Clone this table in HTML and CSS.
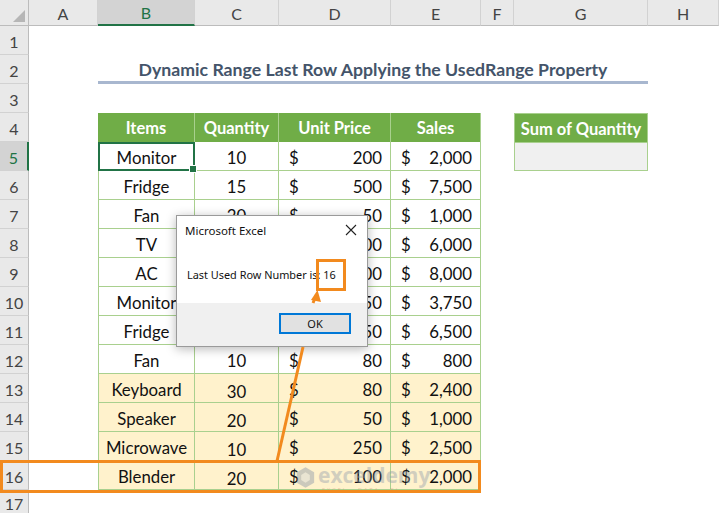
FILE: index.html
```html
<!DOCTYPE html>
<html>
<head>
<meta charset="utf-8">
<link rel="stylesheet" href="styles.css">
</head>
<body>
<div class="sheet">
  <div class="ch corner"><svg width="12" height="12" viewBox="0 0 12 12"><polygon points="12,0 12,12 0,12" fill="#b6b6b6"/></svg></div>
  <div class="ch">A</div><div class="ch chsel">B</div><div class="ch">C</div><div class="ch">D</div><div class="ch">E</div><div class="ch">F</div><div class="ch">G</div><div class="ch">H</div>

  <div class="rh">1</div><div class="blank span8"></div>
  <div class="rh">2</div><div class="blank"></div><div class="title">Dynamic Range Last Row Applying the UsedRange Property</div><div class="blank"></div>
  <div class="rh">3</div><div class="blank span8"></div>

  <div class="rh">4</div><div class="blank"></div>
  <div class="th first">Items</div><div class="th">Quantity</div><div class="th">Unit Price</div><div class="th">Sales</div>
  <div class="blank"></div><div class="th single">Sum of Quantity</div><div class="blank"></div>

  <div class="rh rhsel">5</div><div class="blank"></div>
  <div class="td first sel">Monitor</div><div class="td">10</div><div class="td acct"><span>$</span><span>200</span></div><div class="td acct"><span>$</span><span>2,000</span></div>
  <div class="blank"></div><div class="sumcell"></div><div class="blank"></div>

  <div class="rh">6</div><div class="blank"></div>
  <div class="td first">Fridge</div><div class="td">15</div><div class="td acct"><span>$</span><span>500</span></div><div class="td acct"><span>$</span><span>7,500</span></div><div class="blank span3"></div>

  <div class="rh">7</div><div class="blank"></div>
  <div class="td first">Fan</div><div class="td">20</div><div class="td acct"><span>$</span><span>50</span></div><div class="td acct"><span>$</span><span>1,000</span></div><div class="blank span3"></div>

  <div class="rh">8</div><div class="blank"></div>
  <div class="td first">TV</div><div class="td">20</div><div class="td acct"><span>$</span><span>300</span></div><div class="td acct"><span>$</span><span>6,000</span></div><div class="blank span3"></div>

  <div class="rh">9</div><div class="blank"></div>
  <div class="td first">AC</div><div class="td">20</div><div class="td acct"><span>$</span><span>400</span></div><div class="td acct"><span>$</span><span>8,000</span></div><div class="blank span3"></div>

  <div class="rh">10</div><div class="blank"></div>
  <div class="td first">Monitor</div><div class="td">15</div><div class="td acct"><span>$</span><span>250</span></div><div class="td acct"><span>$</span><span>3,750</span></div><div class="blank span3"></div>

  <div class="rh">11</div><div class="blank"></div>
  <div class="td first">Fridge</div><div class="td">10</div><div class="td acct"><span>$</span><span>650</span></div><div class="td acct"><span>$</span><span>6,500</span></div><div class="blank span3"></div>

  <div class="rh">12</div><div class="blank"></div>
  <div class="td first">Fan</div><div class="td">10</div><div class="td acct"><span>$</span><span>80</span></div><div class="td acct"><span>$</span><span>800</span></div><div class="blank span3"></div>

  <div class="rh">13</div><div class="blank"></div>
  <div class="td first y">Keyboard</div><div class="td y low">30</div><div class="td acct y"><span>$</span><span>80</span></div><div class="td acct y"><span>$</span><span>2,400</span></div><div class="blank span3"></div>

  <div class="rh">14</div><div class="blank"></div>
  <div class="td first y">Speaker</div><div class="td y low">20</div><div class="td acct y"><span>$</span><span>50</span></div><div class="td acct y"><span>$</span><span>1,000</span></div><div class="blank span3"></div>

  <div class="rh">15</div><div class="blank"></div>
  <div class="td first y">Microwave</div><div class="td y low">10</div><div class="td acct y"><span>$</span><span>250</span></div><div class="td acct y"><span>$</span><span>2,500</span></div><div class="blank span3"></div>

  <div class="rh">16</div><div class="blank"></div>
  <div class="td first y">Blender</div><div class="td y low">20</div><div class="td acct y"><span>$</span><span>100</span></div><div class="td acct y"><span>$</span><span>2,000</span></div><div class="blank span3"></div>

  <div class="rh last">17</div><div class="blank span8"></div>
</div>

<div class="watermark">
  <svg class="wm-icon" width="19" height="23" viewBox="0 0 22 26">
    <polygon points="11,1 21,7 21,19 11,25 1,19 1,7" fill="#7f8ea6"/>
    <polygon points="11,7 16,10 16,16 11,19 6,16 6,10" fill="#c9d0dc"/>
  </svg>
  <div class="wm-text">
    <div class="wm-name">exceldemy</div>
    <div class="wm-sub">EXCEL · DATA · BI</div>
  </div>
</div>

<div class="dialog">
  <div class="dlg-title">
    <span>Microsoft Excel</span>
    <svg width="12" height="12" viewBox="0 0 12 12"><path d="M1 1 L11 11 M11 1 L1 11" stroke="#222" stroke-width="1.1" fill="none"/></svg>
  </div>
  <div class="dlg-body">Last Used Row Number is: 16</div>
  <div class="dlg-foot"><div class="okbtn">OK</div></div>
</div>

<svg class="annot" width="719" height="513" viewBox="0 0 719 513">
  <rect x="1.5" y="461.5" width="478" height="30" fill="none" stroke="#f28a1e" stroke-width="3"/>
  <rect x="317.5" y="260.5" width="27" height="29" fill="none" stroke="#f28a1e" stroke-width="3"/>
  <line x1="277" y1="461" x2="303" y2="347" stroke="#f28a1e" stroke-width="3"/>
  <line x1="313" y1="303" x2="315.5" y2="297" stroke="#f28a1e" stroke-width="3"/>
  <polygon points="317.5,290 321,302 311,300" fill="#f28a1e"/>
</svg>
</body>
</html>
```

FILE: styles.css
```css
* { box-sizing: border-box; }
html, body { margin: 0; padding: 0; background: #fff; }
body {
  width: 719px;
  height: 513px;
  overflow: hidden;
  position: relative;
  font-family: Lato, "Liberation Sans", sans-serif;
}
.sheet {
  display: grid;
  grid-template-columns: 29px 69px 97px 84px 112px 90px 33px 134px 71px;
  grid-template-rows: 26px repeat(17, 29px);
  width: 719px;
}
.ch {
  background: #e9e9e9;
  border-right: 1px solid #d2d2d2;
  border-bottom: 1px solid #bcbcbc;
  display: flex;
  align-items: center;
  justify-content: center;
  color: #444;
  font-size: 16px;
  padding-top: 1px;
}
.ch.corner {
  justify-content: flex-end;
  align-items: flex-end;
  padding: 0 3px 3px 0;
  border-right: 1px solid #bcbcbc;
}
.ch.chsel {
  background: #d3d3d3;
  border-bottom: 2px solid #217346;
  color: #217346;
}
.rh {
  background: #e9e9e9;
  border-right: 1px solid #bcbcbc;
  border-bottom: 1px solid #d2d2d2;
  display: flex;
  align-items: center;
  justify-content: center;
  color: #444;
  font-size: 16px;
  padding-top: 3px;
}
.rh.last { align-items: flex-start; padding-top: 4px; }
.rh.rhsel {
  background: #d3d3d3;
  border-right: 2px solid #217346;
  color: #217346;
}
.blank { background: #fff; }
.span8 { grid-column: span 8; }
.span3 { grid-column: span 3; }
.title {
  grid-column: span 6;
  border-bottom: 3px solid #a8b7cf;
  color: #44546a;
  font-weight: 700;
  font-size: 17.7px;
  display: flex;
  align-items: center;
  justify-content: center;
  padding-top: 3px;
}
.th {
  background: #70ad47;
  color: #fff;
  font-weight: 700;
  font-size: 16.5px;
  display: flex;
  align-items: center;
  justify-content: center;
  border-right: 1px solid #a9d08e;
  padding-top: 1px;
}
.th.single { border: 1px solid #a9d08e; border-bottom: none; }
.td {
  font-size: 16.8px;
  color: #111;
  display: flex;
  align-items: center;
  justify-content: center;
  border-right: 1px solid #a9d08e;
  border-bottom: 1px solid #a9d08e;
  padding-top: 2px;
}
.td.first { border-left: 1px solid #a9d08e; }
.td.y { background: #fff2cc; }
.td.low { padding-top: 7px; }
.td.acct {
  justify-content: space-between;
  padding: 2px 8px 0 10px;
}
.sel {
  position: relative;
  border: 2px solid #217346 !important;
}
.sel::after {
  content: "";
  position: absolute;
  right: -4px;
  bottom: -4px;
  width: 6px;
  height: 6px;
  background: #217346;
  border: 1px solid #fff;
}
.sumcell {
  background: #f0f0f0;
  border: 1px solid #a9d08e;
}

.watermark {
  position: absolute;
  left: 296px;
  top: 465px;
  display: flex;
  align-items: flex-start;
  gap: 3px;
  opacity: 0.4;
}
.wm-icon { margin-top: 1px; }
.wm-text { display: flex; flex-direction: column; }
.wm-name {
  font-family: "Open Sans", sans-serif;
  font-weight: 700;
  font-size: 21px;
  line-height: 21px;
  color: #8d99ab;
}
.wm-sub {
  font-family: "Open Sans", sans-serif;
  font-size: 5.5px;
  letter-spacing: 2px;
  color: #d98c6a;
  margin-left: 4px;
}

.dialog {
  position: absolute;
  left: 176px;
  top: 215px;
  width: 192px;
  height: 132px;
  background: #fff;
  border: 1px solid #9a9a9a;
  box-shadow: 0 2px 10px rgba(0,0,0,0.28);
  display: flex;
  flex-direction: column;
  font-family: "Noto Sans", "Open Sans", sans-serif;
  color: #111;
}
.dlg-title {
  display: flex;
  justify-content: space-between;
  align-items: center;
  padding: 1px 10px 0 8px;
  height: 27px;
  font-size: 11.5px;
}
.dlg-body {
  flex: 1;
  font-size: 10.9px;
  padding: 24px 0 0 10px;
}
.dlg-foot {
  height: 43px;
  background: #f0f0f0;
  display: flex;
  justify-content: flex-end;
  padding: 10px 16px 0 0;
}
.okbtn {
  width: 72px;
  height: 21px;
  border: 2px solid #0078d7;
  background: #e1e1e1;
  display: flex;
  align-items: center;
  justify-content: center;
  font-size: 11px;
}
.annot {
  position: absolute;
  left: 0;
  top: 0;
  pointer-events: none;
}
```
